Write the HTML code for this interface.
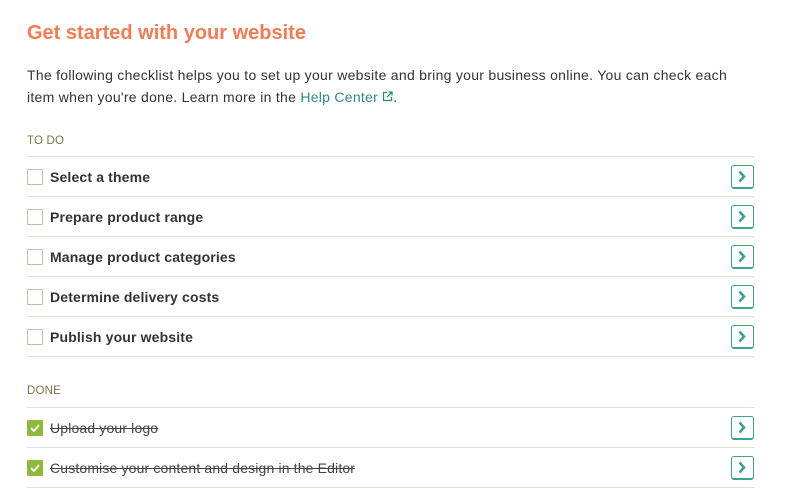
<!DOCTYPE html><html><head><style>
body{margin:0;background:#fff;font-family:"Liberation Sans",sans-serif;color:#333;width:785px;height:484px;overflow:hidden;position:relative}
h1{position:absolute;left:27px;top:20px;margin:0;font-size:20px;color:#f47c50;font-weight:bold;line-height:26px}
p{position:absolute;left:27px;top:64px;margin:0;font-size:14px;line-height:22px;width:710px;color:#333;letter-spacing:0.28px}
a{color:#2e8b7d;text-decoration:none}
.lbl{position:absolute;left:27px;font-size:11.5px;color:#7a7548;letter-spacing:.2px}
.list{position:absolute;left:27px;width:727px;border-top:1px solid #e4e2d2}
.row{height:39px;border-bottom:1px solid #e4e2d2;position:relative}
.cb{position:absolute;left:0;top:12px;width:14px;height:14px;border:1.5px solid #c3bea0;border-radius:1px}
.cb.on{background:#8dba3a;border-color:#8dba3a}
.t{position:absolute;left:23px;top:12px;font-size:14px;font-weight:bold;color:#333;letter-spacing:0.15px}
.t.d{font-weight:normal;text-decoration:line-through;color:#444}
.btn{position:absolute;right:0;top:8px;width:21px;height:21px;border:1.5px solid #3ba294;border-bottom-width:2.5px;border-radius:3px;box-sizing:content-box}
.btn svg{position:absolute;left:0;top:0}
</style></head><body>
<h1>Get started with your website</h1>
<p>The following checklist helps you to set up your website and bring your business online. You can check each<br>item when you're done. Learn more in the <a>Help Center <svg width="11" height="11" viewBox="0 0 11 11" style="vertical-align:0"><path d="M5 1.5H1.5v8h8V6M6.5 1h3.5v3.5M10 1L5 6" fill="none" stroke="#2e8b7d" stroke-width="1.3"/></svg></a>.</p>
<div class="lbl" style="top:135px">TO DO</div>
<div class="list" style="top:156px">
<div class="row"><div class="cb"></div><div class="t">Select a theme</div><div class="btn"><svg width="21" height="21"><path d="M7.5 5.5l4.5 5-4.5 5" fill="none" stroke="#3ba294" stroke-width="2.6"/></svg></div></div>
<div class="row"><div class="cb"></div><div class="t">Prepare product range</div><div class="btn"><svg width="21" height="21"><path d="M7.5 5.5l4.5 5-4.5 5" fill="none" stroke="#3ba294" stroke-width="2.6"/></svg></div></div>
<div class="row"><div class="cb"></div><div class="t">Manage product categories</div><div class="btn"><svg width="21" height="21"><path d="M7.5 5.5l4.5 5-4.5 5" fill="none" stroke="#3ba294" stroke-width="2.6"/></svg></div></div>
<div class="row"><div class="cb"></div><div class="t">Determine delivery costs</div><div class="btn"><svg width="21" height="21"><path d="M7.5 5.5l4.5 5-4.5 5" fill="none" stroke="#3ba294" stroke-width="2.6"/></svg></div></div>
<div class="row"><div class="cb"></div><div class="t">Publish your website</div><div class="btn"><svg width="21" height="21"><path d="M7.5 5.5l4.5 5-4.5 5" fill="none" stroke="#3ba294" stroke-width="2.6"/></svg></div></div>
</div>
<div class="lbl" style="top:385px">DONE</div>
<div class="list" style="top:407px">
<div class="row"><div class="cb on"><svg width="14" height="14" style="position:absolute;left:0;top:0"><path d="M3 7l3 3 5-6" fill="none" stroke="#fff" stroke-width="1.8"/></svg></div><div class="t d">Upload your logo</div><div class="btn"><svg width="21" height="21"><path d="M7.5 5.5l4.5 5-4.5 5" fill="none" stroke="#3ba294" stroke-width="2.6"/></svg></div></div>
<div class="row"><div class="cb on"><svg width="14" height="14" style="position:absolute;left:0;top:0"><path d="M3 7l3 3 5-6" fill="none" stroke="#fff" stroke-width="1.8"/></svg></div><div class="t d">Customise your content and design in the Editor</div><div class="btn"><svg width="21" height="21"><path d="M7.5 5.5l4.5 5-4.5 5" fill="none" stroke="#3ba294" stroke-width="2.6"/></svg></div></div>
</div>
</body></html>
